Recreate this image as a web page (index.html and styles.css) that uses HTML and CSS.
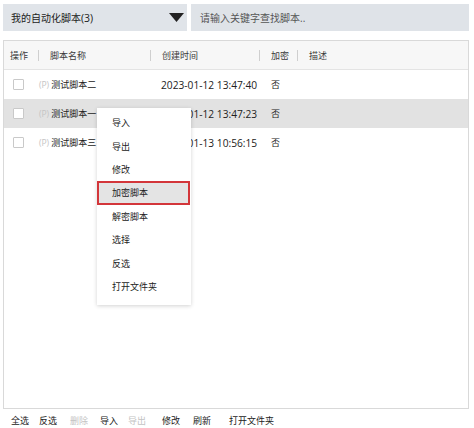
FILE: index.html
```html
<!DOCTYPE html>
<html lang="zh-CN">
<head>
<meta charset="utf-8">
<title>我的自动化脚本</title>
<link rel="stylesheet" href="styles.css">
</head>
<body>
<div class="app">
  <div class="topbar">
    <div class="select">
      <span class="select-text">我的自动化脚本<span class="lat">(3)</span></span>
      <svg class="caret" width="15" height="9" viewBox="0 0 15 9"><polygon points="0,0 15,0 7.5,9" fill="#222"/></svg>
    </div>
    <div class="search">请输入关键字查找脚本<span class="lat">..</span></div>
  </div>

  <div class="table">
    <div class="row head">
      <div class="c c1">操作</div>
      <div class="c c2">脚本名称</div>
      <div class="c c3">创建时间</div>
      <div class="c c4">加密</div>
      <div class="c c5">描述</div>
    </div>
    <div class="row">
      <div class="c c1"><span class="check"></span></div>
      <div class="c c2"><span class="tag">(P)</span>测试脚本二</div>
      <div class="c c3"><span class="lat date">2023-01-12 13:47:40</span></div>
      <div class="c c4">否</div>
      <div class="c c5"></div>
    </div>
    <div class="row sel">
      <div class="c c1"><span class="check"></span></div>
      <div class="c c2"><span class="tag">(P)</span>测试脚本一</div>
      <div class="c c3"><span class="lat date">2023-01-12 13:47:23</span></div>
      <div class="c c4">否</div>
      <div class="c c5"></div>
    </div>
    <div class="row">
      <div class="c c1"><span class="check"></span></div>
      <div class="c c2"><span class="tag">(P)</span>测试脚本三</div>
      <div class="c c3"><span class="lat date">2023-01-13 10:56:15</span></div>
      <div class="c c4">否</div>
      <div class="c c5"></div>
    </div>
  </div>

  <div class="toolbar">
    <span class="btn">全选</span>
    <span class="btn">反选</span>
    <span class="btn off">删除</span>
    <span class="btn">导入</span>
    <span class="btn off">导出</span>
    <span class="btn">修改</span>
    <span class="btn">刷新</span>
    <span class="btn">打开文件夹</span>
  </div>

  <div class="menu">
    <div class="item">导入</div>
    <div class="item">导出</div>
    <div class="item">修改</div>
    <div class="item active">加密脚本</div>
    <div class="item">解密脚本</div>
    <div class="item">选择</div>
    <div class="item">反选</div>
    <div class="item">打开文件夹</div>
  </div>
</div>
</body>
</html>
```

FILE: styles.css
```css
html, body {
  margin: 0;
  padding: 0;
  background: #ffffff;
}

body {
  font-family: "Noto Sans CJK SC", "Noto Sans", sans-serif;
  font-size: 9px;
  color: #222222;
}

.app {
  position: relative;
  width: 474px;
  height: 428px;
  overflow: hidden;
}

.lat {
  font-family: "Open Sans", "Noto Sans CJK SC", sans-serif;
}

.topbar {
  display: flex;
  gap: 4px;
  padding: 4px 0 0 3px;
}

.select {
  width: 184px;
  height: 27px;
  box-sizing: border-box;
  background: #e0e4e9;
  display: flex;
  align-items: center;
  justify-content: space-between;
  padding: 0 3px 0 8px;
  font-size: 10px;
  color: #222;
}

.select .lat {
  font-size: 10.5px;
}

.caret {
  display: block;
}

.search {
  width: 278px;
  height: 27px;
  box-sizing: border-box;
  background: #dfe3e8;
  display: flex;
  align-items: center;
  padding-left: 9px;
  font-size: 10px;
  color: #555;
}

.table {
  margin: 9px 0 0 3px;
  width: 466px;
  height: 369px;
  box-sizing: border-box;
  border: 1px solid #d9d9d9;
}

.row {
  display: grid;
  grid-template-columns: 34px 112px 109px 38px 1fr;
  height: 29px;
  align-items: center;
}

.row.head {
  background: #f7f7f7;
  border-bottom: 1px solid #e4e4e4;
  height: 28px;
  color: #3a3a3a;
}

.row.sel {
  background: #e2e2e2;
}

.c {
  display: flex;
  align-items: center;
  height: 100%;
  white-space: nowrap;
  position: relative;
}

.head .c {
  padding-left: 12px;
}

.head .c1 {
  padding-left: 6px;
}

.head .c + .c::before {
  content: "";
  position: absolute;
  left: 0;
  top: 9px;
  height: 11px;
  border-left: 1px solid #cfcfcf;
}

.row:not(.head) .c1 {
  padding-left: 9px;
}

.row:not(.head) .c2 {
  padding-left: 1px;
}

.row:not(.head) .c3 {
  padding-left: 11px;
}

.row:not(.head) .c4 {
  padding-left: 12px;
}

.check {
  width: 11px;
  height: 11px;
  box-sizing: border-box;
  border: 1px solid #c9c9c9;
  background: #fff;
  border-radius: 1px;
}

.tag {
  font-family: "Open Sans", sans-serif;
  font-size: 8.5px;
  color: #c4c4c4;
  margin-right: 2px;
}

.date {
  font-size: 10.2px;
  color: #222;
}

.toolbar {
  display: flex;
  align-items: center;
  height: 22px;
  padding-left: 11px;
  color: #222;
}

.btn {
  width: 28px;
}

.btn:nth-child(2) { width: 31px; }
.btn:nth-child(3) { width: 30px; }
.btn:nth-child(4) { width: 28px; }
.btn:nth-child(5) { width: 34px; }
.btn:nth-child(6) { width: 31px; }
.btn:nth-child(7) { width: 36px; }
.btn:nth-child(8) { width: auto; }

.btn.off {
  color: #c3c3c3;
}

.menu {
  position: absolute;
  left: 97px;
  top: 108px;
  width: 94px;
  box-sizing: border-box;
  padding: 3px 0 7px;
  background: #ffffff;
  box-shadow: 0 1px 4px rgba(0, 0, 0, 0.18);
}

.item {
  height: 23.4px;
  box-sizing: border-box;
  display: flex;
  align-items: center;
  padding-left: 15px;
  color: #222;
}

.item.active {
  background: #e4e4e4;
  border: 2px solid #d3363a;
  padding-left: 13px;
  margin: 0 1px 0 0;
}
```
